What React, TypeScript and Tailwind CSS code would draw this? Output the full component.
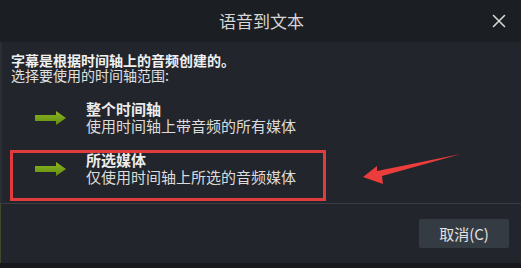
import React from "react";

function GreenArrow() {
  return (
    <svg width="32" height="16" viewBox="0 0 32 16">
      <defs>
        <linearGradient id="ga" x1="0" y1="0" x2="0" y2="1">
          <stop offset="0" stopColor="#8fb822" />
          <stop offset="1" stopColor="#5f8c10" />
        </linearGradient>
      </defs>
      <polygon points="0,5 21,5 21,1 31,8 21,15 21,11 0,11" fill="url(#ga)" />
    </svg>
  );
}

function Option({ title, desc }: { title: string; desc: string }) {
  return (
    <div className="flex items-center">
      <div className="w-[86px] flex pl-[35px] pt-[2px]">
        <GreenArrow />
      </div>
      <div className="flex flex-col">
        <div className="text-[15px] leading-[17px] font-bold text-[#ececec]">{title}</div>
        <div className="text-[15px] leading-[17px] text-[#dcdcdc]">{desc}</div>
      </div>
    </div>
  );
}

export default function App() {
  return (
    <div
      className="relative w-[521px] h-[268px] flex flex-col bg-[#22252b] overflow-hidden"
      style={{ fontFamily: '"Noto Sans CJK SC", "Noto Sans", sans-serif' }}
    >
      <div className="h-[42px] shrink-0 grid grid-cols-[1fr_auto_1fr] items-center bg-[#1b1e22]">
        <div />
        <div className="text-[17px] leading-[20px] text-[#d6d6d6] pl-[2px]">语音到文本</div>
        <div className="flex justify-end pr-[15px]">
          <svg width="14" height="14" viewBox="0 0 14 14">
            <path d="M1.5 1.5 L12.5 12.5 M12.5 1.5 L1.5 12.5" stroke="#d8d8d8" strokeWidth="1.6" strokeLinecap="round" />
          </svg>
        </div>
      </div>
      <div className="h-[161px] shrink-0 flex flex-col pt-[11px] border-l-2 border-[#2b2e34]">
        <div className="pl-[9px] text-[14px] leading-[15px] font-bold text-[#f0f0f0]">
          字幕是根据时间轴上的音频创建的。
        </div>
        <div className="pl-[9px] text-[14px] leading-[15px] text-[#e0e0e0]">选择要使用的时间轴范围:</div>
        <div className="mt-[17px] ml-[-2px]">
          <Option title="整个时间轴" desc="使用时间轴上带音频的所有媒体" />
        </div>
        <div className="relative mt-[17px] ml-[-2px]">
          <Option title="所选媒体" desc="仅使用时间轴上所选的音频媒体" />
          <div className="absolute left-[10px] top-[-1px] w-[316px] h-[51px] border-[3px] border-[#e23b3e]" />
        </div>
      </div>
      <div className="h-px shrink-0 bg-[#3a3d43]" />
      <div className="flex-1 flex justify-end items-start pt-[15px] pr-[12px] border-l border-[#3e4a2c]">
        <button className="w-[90px] h-[29px] rounded-[2px] bg-[#343b42] text-[15px] leading-[20px] text-[#e2e2e2]">
          取消(C)
        </button>
      </div>
      <div className="h-[5px] shrink-0 bg-[#16181b]" />
      <svg className="absolute left-[358px] top-[148px]" width="108" height="40" viewBox="0 0 108 40">
        <polygon
          points="5,29 19,18 19,23 103,6 24,28 25,36"
          fill="#ec3d3d"
        />
      </svg>
    </div>
  );
}
